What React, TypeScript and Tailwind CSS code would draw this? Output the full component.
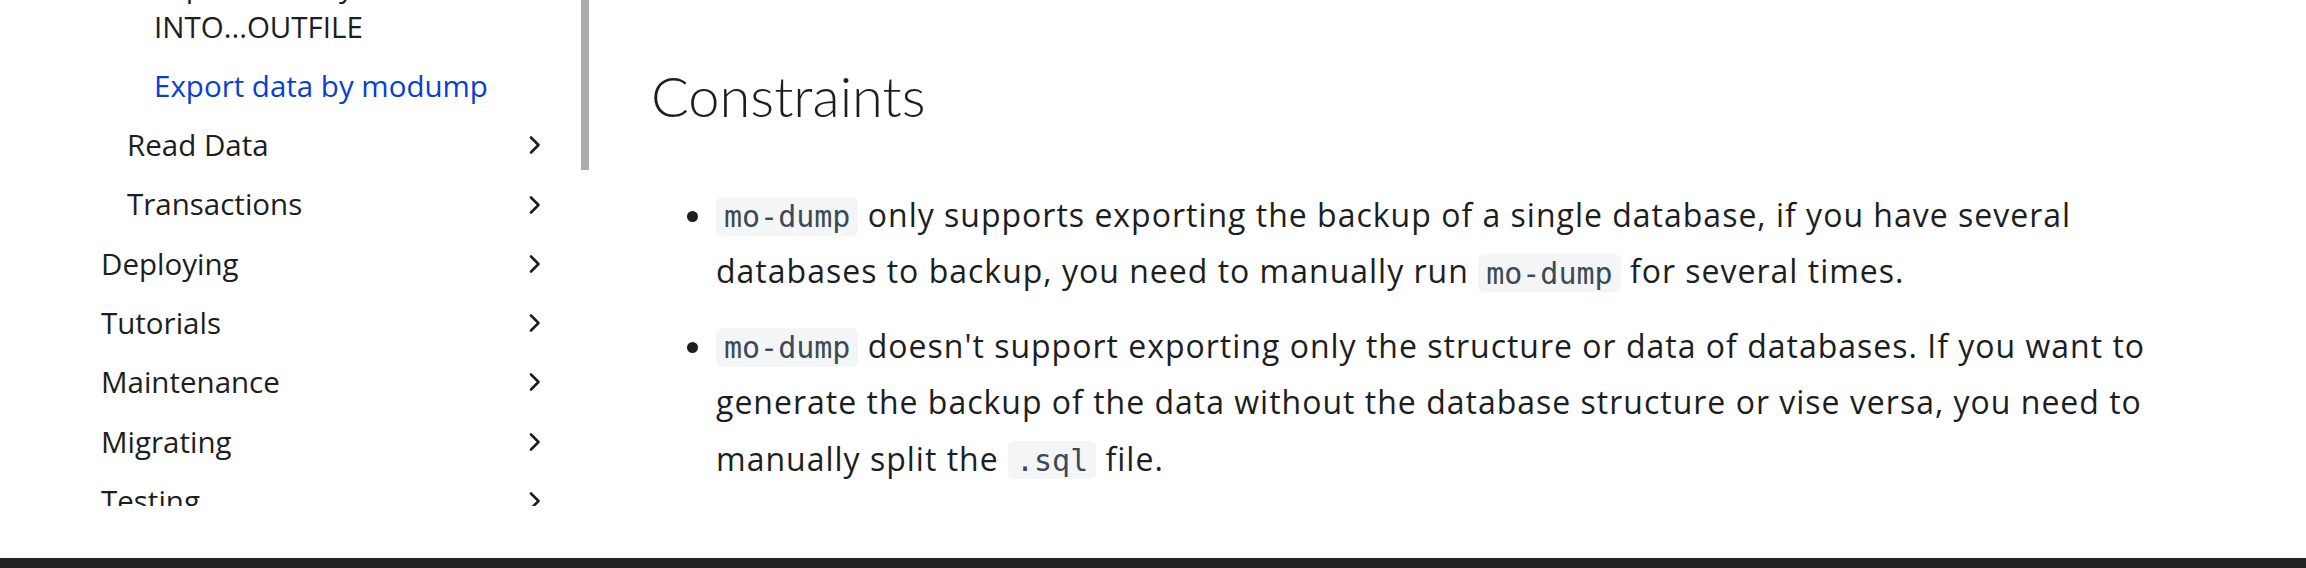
const body = "font-['Open_Sans','Noto_Sans',sans-serif]";

function Chevron() {
  return (
    <svg width="13" height="20" viewBox="0 0 13 20" className="shrink-0">
      <polyline
        points="3,2.5 10.5,10 3,17.5"
        fill="none"
        stroke="#1c1e21"
        strokeWidth="2.6"
        strokeLinecap="round"
        strokeLinejoin="round"
      />
    </svg>
  );
}

function NavRow({
  label,
  indent,
  caret = true,
  active = false,
}: {
  label: string;
  indent: string;
  caret?: boolean;
  active?: boolean;
}) {
  return (
    <div className={`flex h-[59.3px] items-center justify-between pr-[48px] ${indent}`}>
      <span className={active ? "text-[#0a3fd6]" : "text-[#1c1e21]"}>{label}</span>
      {caret && <Chevron />}
    </div>
  );
}

function Code({ children }: { children: string }) {
  return (
    <code className="rounded-md bg-[#f4f5f6] px-[8px] py-[1.7px] font-['DejaVu_Sans_Mono',monospace] text-[30px] leading-none tracking-normal text-[#3a4a56]">
      {children}
    </code>
  );
}

export default function App() {
  return (
    <div className={`flex h-[568px] w-[2306px] flex-col overflow-hidden bg-white ${body}`}>
      <div className="flex min-h-0 flex-1">
        {/* sidebar, scrolled part way down */}
        <aside className="relative h-[506px] w-[589px] shrink-0 overflow-hidden">
          <div className="-mt-[44px] text-[29.5px]">
            <div className="py-[9.15px] pl-[154px] leading-[41px] text-[#1c1e21]">
              Export data by SELECT
              <br />
              INTO...OUTFILE
            </div>
            <NavRow label="Export data by modump" indent="pl-[154px]" caret={false} active />
            <NavRow label="Read Data" indent="pl-[127px]" />
            <NavRow label="Transactions" indent="pl-[127px]" />
            <NavRow label="Deploying" indent="pl-[101px]" />
            <NavRow label="Tutorials" indent="pl-[101px]" />
            <NavRow label="Maintenance" indent="pl-[101px]" />
            <NavRow label="Migrating" indent="pl-[101px]" />
            <NavRow label="Testing" indent="pl-[101px]" />
          </div>
          <div className="absolute right-0 top-0 h-[170px] w-[8px] bg-[#ababab]" />
        </aside>

        <main className="flex-1 pl-[62px] text-[#1c1e21]">
          <h2 className="mt-[60px] font-['Lato',sans-serif] text-[56px] font-light leading-[72px]">Constraints</h2>
          <ul className="mt-[55px] list-disc pl-[65px] text-[32px] leading-[56.3px] tracking-[1px] marker:text-[#1c1e21]">
            <li>
              <Code>mo-dump</Code> only supports exporting the backup of a single database, if you have several
              <br />
              databases to backup, you need to manually run <Code>mo-dump</Code> for several times.
            </li>
            <li className="mt-[18.5px]">
              <Code>mo-dump</Code> doesn't support exporting only the structure or data of databases. If you want to
              <br />
              generate the backup of the data without the database structure or vise versa, you need to
              <br />
              manually split the <Code>.sql</Code> file.
            </li>
          </ul>
        </main>
      </div>
      <div className="h-[10px] bg-[#222222]" />
    </div>
  );
}
